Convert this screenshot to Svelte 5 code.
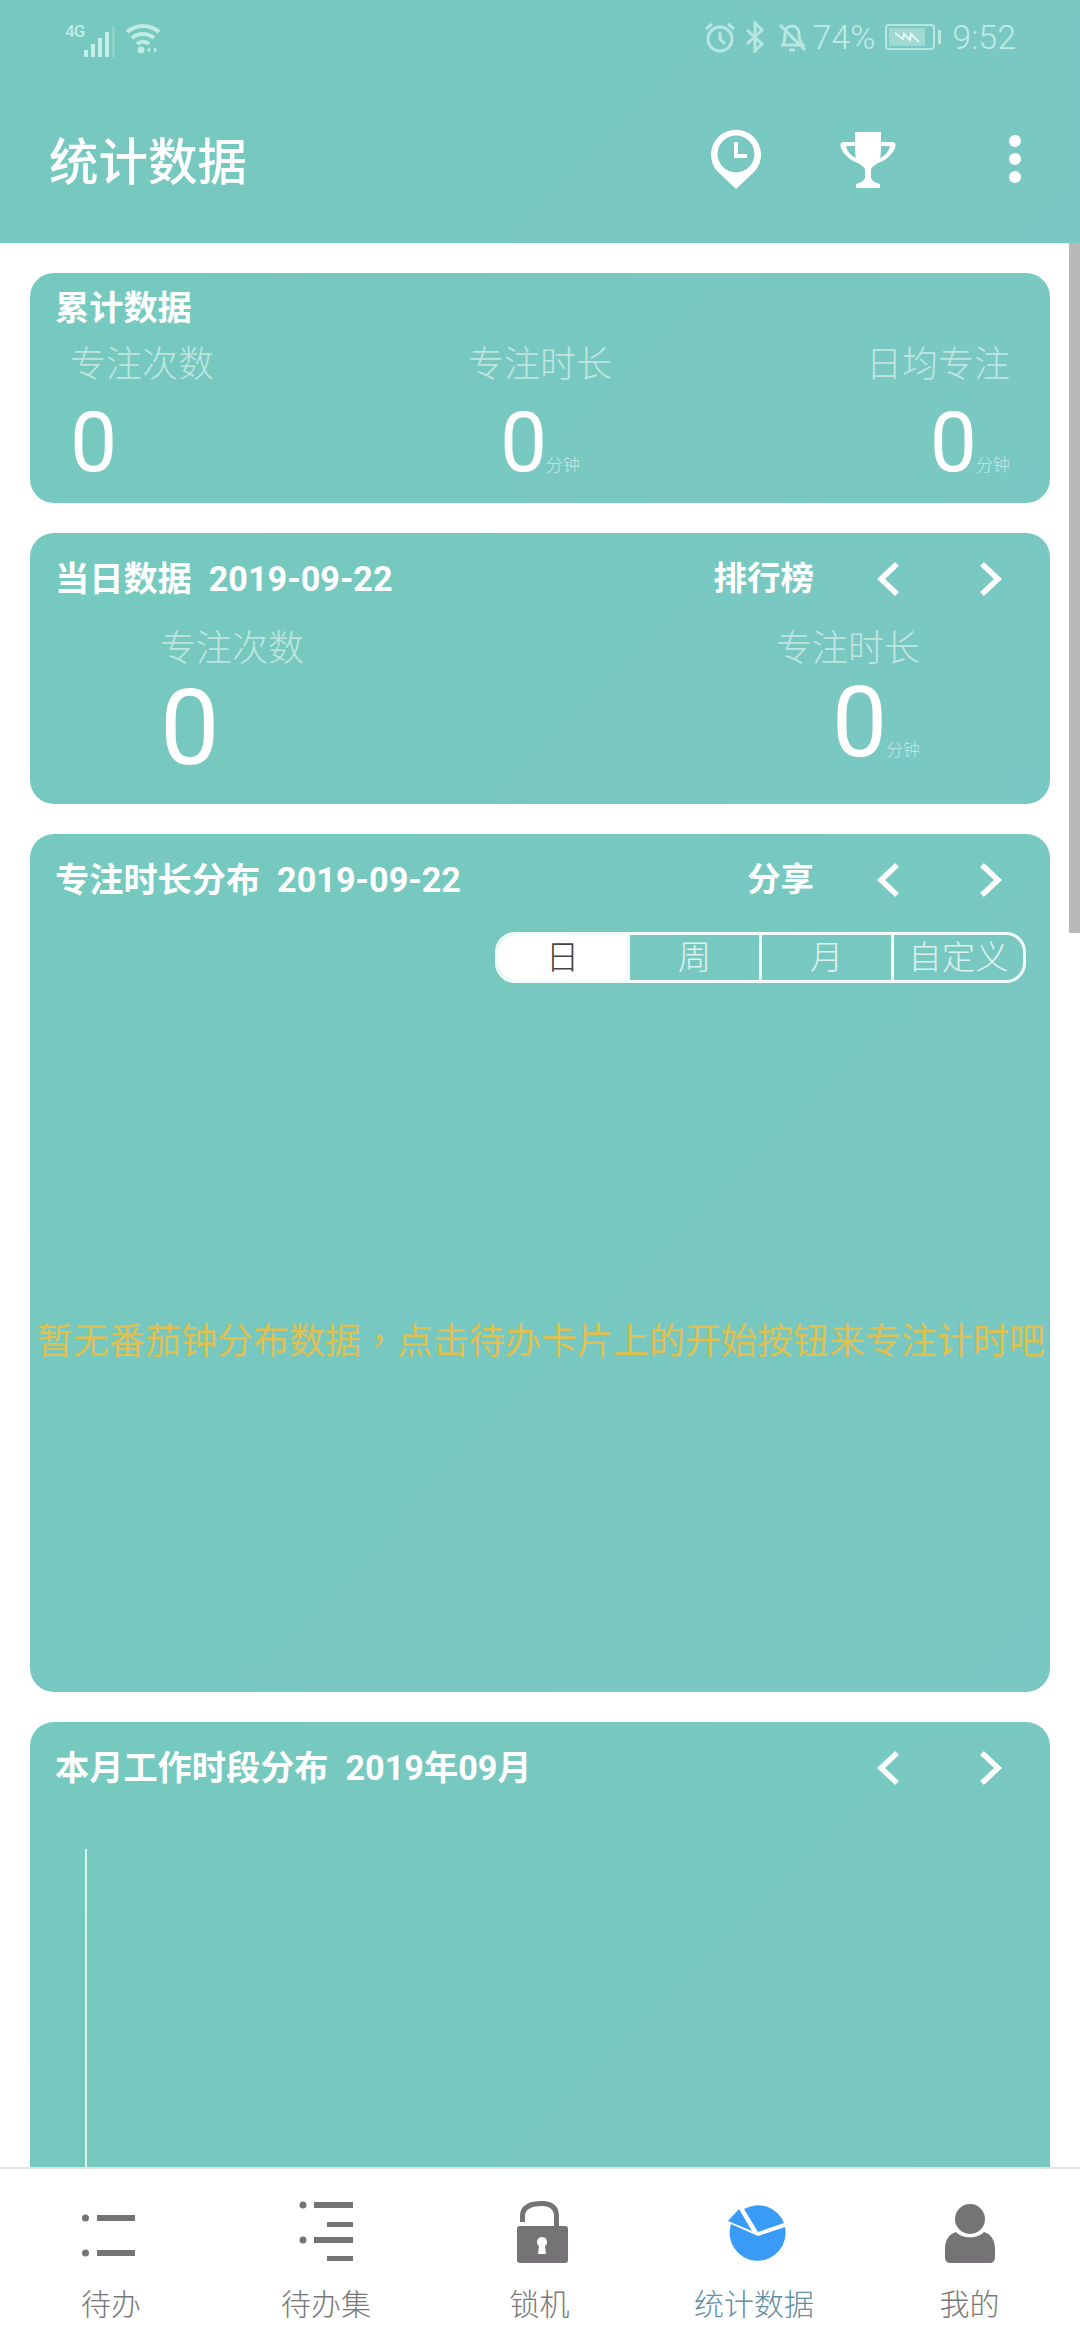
<script>
	const tabs = [
		{ key: 'todo', label: '待办' },
		{ key: 'sets', label: '待办集' },
		{ key: 'lock', label: '锁机' },
		{ key: 'stats', label: '统计数据', active: true },
		{ key: 'me', label: '我的' }
	];
	const ranges = ['日', '周', '月', '自定义'];
</script>

{#snippet chevrons()}
	<svg class="chev" width="25" height="36" viewBox="0 0 25 36"><polyline points="21,3 5,18 21,33" /></svg>
	<svg class="chev next" width="25" height="36" viewBox="0 0 25 36"><polyline points="4,3 20,18 4,33" /></svg>
{/snippet}

<div class="phone">
	<header class="appbar">
		<div class="status">
			<div class="status-left">
				<span class="net">4G</span>
				<svg width="34" height="34" viewBox="0 0 34 34" class="signal">
					<rect x="2" y="25" width="4" height="7" />
					<rect x="9" y="19" width="4" height="13" />
					<rect x="16" y="13" width="4" height="19" />
					<rect x="23" y="7" width="4" height="25" />
					<rect x="30" y="2" width="3" height="30" opacity="0.3" />
				</svg>
				<svg width="38" height="32" viewBox="0 0 38 32" class="wifi">
					<path d="M2 9 A24 24 0 0 1 34 9" />
					<path d="M7 15 A17 17 0 0 1 29 15" />
					<path d="M12 21 A9 9 0 0 1 24 21" />
					<circle cx="16" cy="27" r="3.5" class="solid" />
					<path d="M25 24 L22 27 L25 30 Z M29 24 L32 27 L29 30 Z" class="solid" />
				</svg>
			</div>
			<div class="status-right">
				<svg width="32" height="32" viewBox="0 0 32 32" class="line">
					<circle cx="16" cy="18" r="12" />
					<path d="M16 11 V18 L21 23 M2 8 L8 3 M30 8 L24 3" />
				</svg>
				<svg width="20" height="32" viewBox="0 0 20 32" class="line bt">
					<path d="M2 9 L17 23 L10 30 V2 L17 9 L2 23" />
				</svg>
				<svg width="28" height="32" viewBox="0 0 28 32" class="line bell">
					<path d="M5 24 C7 20 7 16 7 13 C7 8 10 5 14 5 C18 5 21 8 21 13 C21 17 22 21 25 24 Z M11 29 H17 M2 4 L27 29" />
				</svg>
				<span class="pct">74%</span>
				<span class="battery"><span class="battery-fill">
					<svg width="30" height="16" viewBox="0 0 30 16"><path d="M3 4 L11 10 L12 5 L18 11 L19 5 L27 13" /></svg>
				</span></span>
				<span class="nub"></span>
				<span class="clock">9:52</span>
			</div>
		</div>
		<div class="toolbar">
			<h1>统计数据</h1>
			<div class="actions">
				<svg width="50" height="60" viewBox="0 0 50 60">
					<path class="pin" fill-rule="evenodd" d="M25 60 L6 42 A25 25 0 1 1 44 42 Z M25 6.5 A18.5 18.5 0 1 0 25 43.5 A18.5 18.5 0 1 0 25 6.5 Z" />
					<path class="hands" d="M25 13 V27 H36" />
				</svg>
				<svg width="56" height="56" viewBox="0 0 56 56">
					<path class="pin" d="M15 0 H41 V10 H52 C56 10 56 13 55 16 C53 22 45 29 38 31 C35 33 32 35 31 37 V46 C32 49 36 51 40 52 V56 H16 V52 C20 51 24 49 25 46 V37 C24 35 21 33 18 31 C11 29 3 22 1 16 C0 13 0 10 4 10 H15 Z M6 14 C7 19 11 24 16 26 C15 22 15 18 15 14 Z M50 14 H41 C41 18 41 22 40 26 C45 24 49 19 50 14 Z" fill-rule="evenodd" />
				</svg>
				<span class="dots"><i></i><i></i><i></i></span>
			</div>
		</div>
	</header>

	<main class="content">
		<section class="card total">
			<h2>累计数据</h2>
			<div class="stats">
				<div class="stat">
					<span class="label">专注次数</span>
					<span class="num">0</span>
				</div>
				<div class="stat center">
					<span class="label">专注时长</span>
					<span class="num">0<small>分钟</small></span>
				</div>
				<div class="stat end">
					<span class="label">日均专注</span>
					<span class="num">0<small>分钟</small></span>
				</div>
			</div>
		</section>

		<section class="card today">
			<div class="card-head">
				<h2>当日数据&nbsp; 2019-09-22</h2>
				<div class="head-tools">
					<span class="link">排行榜</span>
					{@render chevrons()}
				</div>
			</div>
			<div class="stats">
				<div class="stat">
					<span class="label">专注次数</span>
					<span class="num big">0</span>
				</div>
				<div class="stat end">
					<span class="label">专注时长</span>
					<span class="num mid">0<small>分钟</small></span>
				</div>
			</div>
		</section>

		<section class="card dist">
			<div class="card-head">
				<h2>专注时长分布&nbsp; 2019-09-22</h2>
				<div class="head-tools">
					<span class="link">分享</span>
					{@render chevrons()}
				</div>
			</div>
			<div class="ranges">
				{#each ranges as r, i}
					<span class="range" class:on={i === 0}>{r}</span>
				{/each}
			</div>
			<p class="empty">暂无番茄钟分布数据<span class="comma">，</span>点击待办卡片上的开始按钮来专注计时吧</p>
		</section>

		<section class="card month">
			<div class="card-head">
				<h2>本月工作时段分布&nbsp; 2019年09月</h2>
				<div class="head-tools">
					{@render chevrons()}
				</div>
			</div>
			<div class="axis"></div>
		</section>

		<div class="scrollbar"></div>
	</main>

	<nav class="tabbar">
		{#each tabs as tab}
			<div class="tab" class:active={tab.active}>
				<svg width="72" height="72" viewBox="0 0 72 72">
					{#if tab.key === 'todo'}
						<circle cx="10.5" cy="25" r="3.5" /><rect x="22" y="22" width="38" height="6" />
						<circle cx="10.5" cy="60" r="3.5" /><rect x="22" y="57" width="38" height="6" />
					{:else if tab.key === 'sets'}
						<circle cx="13" cy="12" r="3.5" /><rect x="24" y="9" width="39" height="6" />
						<rect x="37" y="29" width="26" height="5" />
						<circle cx="13" cy="47" r="3.5" /><rect x="24" y="44" width="39" height="6" />
						<rect x="37" y="63" width="26" height="5" />
					{:else if tab.key === 'lock'}
						<path fill-rule="evenodd" transform="translate(2 3)" d="M14 26 V20 C14 9 23 5 36 5 C49 5 53 12 53 20 V30 H59 C61 30 62 31 62 33 V64 C62 66 61 67 59 67 H14 C12 67 11 66 11 64 V33 C11 31 12 30 14 30 H19 V20 C19 13 26 10 36 10 C44 10 48 14 48 20 V30 H19 V26 Z M36 41 A5 5 0 0 0 33 50 L32 58 H40 L39 50 A5 5 0 0 0 36 41 Z" />
					{:else if tab.key === 'stats'}
						<g transform="translate(3 1)">
							<path class="blue" d="M37 42 L64 33 A28 28 0 1 1 10 30 Z" />
							<path class="blue" d="M23 15 A28 28 0 0 1 63 29 L37 38 Z" />
							<path class="blue" d="M18 15 L7 27 L31 37 Z" />
						</g>
					{:else}
						<circle cx="36" cy="26" r="15" />
						<path d="M22 39 C28 46 44 46 50 39 C57 41 61 47 61 56 V64 C61 68 59 70 55 70 H17 C13 70 11 68 11 64 V56 C11 47 15 41 22 39 Z" />
					{/if}
				</svg>
				<span>{tab.label}</span>
			</div>
		{/each}
	</nav>
</div>

<style>
	:global(body) {
		margin: 0;
		background: #fff;
	}

	.phone {
		width: 1080px;
		height: 2340px;
		display: flex;
		flex-direction: column;
		overflow: hidden;
		font-family: Roboto, "Noto Sans CJK SC", sans-serif;
		background: #fff;
		color: #fff;
	}

	.appbar {
		height: 243px;
		flex-shrink: 0;
		background: linear-gradient(135deg, #75c9be, #7ac8c3);
		display: flex;
		flex-direction: column;
	}

	.status {
		height: 74px;
		padding: 0 64px 0 65px;
		display: flex;
		justify-content: space-between;
		align-items: center;
		color: #c2ebe6;
	}

	.status-left, .status-right {
		display: flex;
		align-items: center;
	}

	.net {
		font-size: 17px;
		font-weight: 500;
		line-height: 20px;
		align-self: flex-start;
		margin-top: 6px;
		width: 17px;
		letter-spacing: -1px;
	}

	.signal { fill: #c8eeea; margin-top: 10px; }
	.wifi { margin-left: 9px; margin-top: 4px; fill: none; stroke: #c2ebe6; stroke-width: 4; }
	.wifi .solid { fill: #c2ebe6; stroke: none; }

	.line { fill: none; stroke: #b8e6e1; stroke-width: 3; }
	.bt { margin-left: 9px; }
	.bell { margin-left: 13px; }

	.pct {
		font-size: 34px;
		font-weight: 300;
		margin-left: 6px;
	}

	.battery {
		width: 50px;
		height: 26px;
		margin-left: 10px;
		box-sizing: border-box;
		border: 2px solid #b8e6e1;
		border-radius: 4px;
		padding: 2px;
		display: flex;
	}

	.battery-fill {
		width: 36px;
		background: rgba(255, 255, 255, 0.3);
		display: flex;
		align-items: center;
		justify-content: center;
	}

	.battery-fill svg { fill: none; stroke: #e6f8f6; stroke-width: 2; }

	.nub {
		width: 3px;
		height: 14px;
		margin-left: 3px;
		background: #b8e6e1;
	}

	.clock {
		font-size: 34px;
		font-weight: 300;
		margin-left: 11px;
	}

	.toolbar {
		flex: 1;
		display: flex;
		justify-content: space-between;
		align-items: flex-start;
		padding: 55px 60px 0 49px;
	}

	h1 {
		margin: 3px 0 0;
		font-size: 49.5px;
		font-weight: 500;
		line-height: 62px;
	}

	.actions {
		display: flex;
		align-items: flex-start;
		gap: 79px;
	}

	.actions svg:nth-child(2) { margin-top: 3px; }

	.pin { fill: #fff; }
	.hands { fill: none; stroke: #fff; stroke-width: 4; }

	.dots {
		display: flex;
		flex-direction: column;
		gap: 6px;
		margin: 6px -1px 0 34px;
	}

	.dots i {
		width: 12px;
		height: 12px;
		border-radius: 50%;
		background: #fff;
	}

	.content {
		flex: 1;
		min-height: 0;
		position: relative;
		overflow: hidden;
		padding: 30px 30px 0;
		display: flex;
		flex-direction: column;
		gap: 30px;
	}

	.card {
		flex-shrink: 0;
		border-radius: 24px;
		background: linear-gradient(135deg, #75c9be, #7ac8c3);
		box-sizing: border-box;
		padding: 0 25px;
	}

	h2 {
		margin: 0;
		font-size: 34.2px;
		font-weight: 700;
		line-height: 44px;
		white-space: nowrap;
	}

	.total { height: 230px; padding-top: 13px; }
	.total .stats { padding: 0 15px; margin-top: 12px; }
	.total .num { margin-top: 6px; margin-left: 0; }

	.today { height: 271px; padding-top: 24px; }
	.today .stats { padding: 0 105px; margin-top: 25px; }
	.today .num { margin-top: -5px; }

	.dist { height: 858px; padding-top: 24px; display: flex; flex-direction: column; }
	.month { height: 600px; padding-top: 24px; }

	.card-head {
		display: flex;
		justify-content: space-between;
		align-items: center;
	}

	.head-tools {
		display: flex;
		align-items: center;
		margin-right: 22px;
	}

	.link {
		font-size: 33.5px;
		font-weight: 700;
		line-height: 44px;
		margin-right: 62px;
	}

	.chev { fill: none; stroke: #fff; stroke-width: 5.5; }
	.next { margin-left: 77px; }

	.stats {
		display: flex;
		justify-content: space-between;
	}

	.stat {
		display: flex;
		flex-direction: column;
		align-items: flex-start;
		width: 144px;
	}

	.stat.center { align-items: center; }
	.stat.end { align-items: flex-end; }

	.label {
		font-size: 36px;
		font-weight: 300;
		line-height: 46px;
		color: rgba(255, 255, 255, 0.55);
		white-space: nowrap;
	}

	.num {
		font-size: 84px;
		font-weight: 400;
		line-height: 98px;
		white-space: nowrap;
		margin-left: -2px;
	}

	.num.big { font-size: 106px; line-height: 122px; margin-left: 0; }
	.num.mid { font-size: 98px; line-height: 112px; }

	small {
		font-size: 17px;
		font-weight: 300;
		color: rgba(255, 255, 255, 0.6);
		margin-left: -1px;
	}

	.ranges {
		align-self: flex-end;
		width: 531px;
		height: 51px;
		margin: 30px -1px 0 0;
		box-sizing: border-box;
		border: 3px solid #f2fbfa;
		border-radius: 20px;
		overflow: hidden;
		display: flex;
	}

	.range {
		flex: 1;
		font-size: 33.5px;
		font-weight: 300;
		line-height: 45px;
		text-align: center;
		color: rgba(255, 255, 255, 0.75);
		border-left: 3px solid #f2fbfa;
		white-space: nowrap;
	}

	.range.on {
		background: #fff;
		color: #444;
		border-left: 0;
	}

	.empty {
		margin: 0 -17px 0 -18px;
		padding-top: 331px;
		font-size: 36px;
		line-height: 48px;
		text-align: center;
		white-space: nowrap;
		color: #e0c04f;
	}

	.comma { font-family: "Noto Sans CJK TC", sans-serif; }

	.axis {
		width: 1.5px;
		height: 400px;
		margin: 59px 0 0 30px;
		background: rgba(255, 255, 255, 0.75);
	}

	.scrollbar {
		position: absolute;
		top: 0;
		right: 0;
		width: 11px;
		height: 690px;
		background: #b8b8b8;
	}

	.tabbar {
		height: 173px;
		flex-shrink: 0;
		box-sizing: border-box;
		border-top: 2px solid #dde4e3;
		background: #fff;
		display: grid;
		grid-template-columns: 222px 208px 219px 210px 221px;
	}

	.tab {
		display: flex;
		flex-direction: column;
		align-items: center;
		fill: #757375;
		color: #777;
		font-size: 30px;
		font-weight: 300;
		padding-top: 24px;
	}

	.tab svg { margin-bottom: 15px; }
	.tab.active { color: #5f8ea6; }
	.blue { fill: #3a9bf7; }
</style>
